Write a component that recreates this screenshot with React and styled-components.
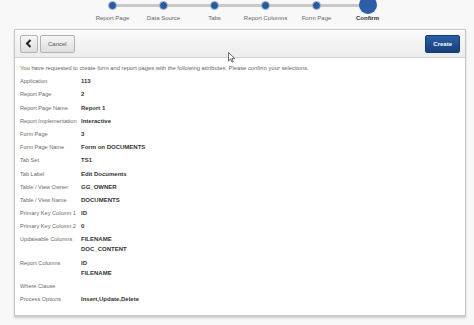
import React from "react";
import styled, { createGlobalStyle } from "styled-components";

const GlobalStyle = createGlobalStyle`
  html, body {
    margin: 0;
    padding: 0;
    background: #f8f8f8;
    font-family: "Liberation Sans", Arial, sans-serif;
    overflow: hidden;
  }
`;

const Page = styled.div`
  position: relative;
  width: 474px;
  height: 325px;
  display: flex;
  flex-direction: column;
  padding: 0 8px 0 14px;
  box-sizing: border-box;
`;

const Stepper = styled.div`
  position: relative;
  display: flex;
  height: 29px;
  margin-left: 73px;
  &::before {
    content: "";
    position: absolute;
    left: 26px;
    width: 254px;
    top: 4px;
    height: 3px;
    background: #c9c9c9;
  }
`;

const Step = styled.div`
  width: 51px;
  display: flex;
  flex-direction: column;
  align-items: center;
`;

const DotSlot = styled.div`
  height: 10px;
  display: flex;
  align-items: center;
  justify-content: center;
  position: relative;
  z-index: 1;
`;

const Dot = styled.div`
  width: ${(p) => (p.$current ? 18 : 7)}px;
  height: ${(p) => (p.$current ? 18 : 7)}px;
  flex-shrink: 0;
  border-radius: 50%;
  background: ${(p) => (p.$current ? "#2c5ea6" : "#2a5a9c")};
  border: ${(p) => (p.$current ? "0" : "1px solid #a9bcd6")};
`;

const StepLabel = styled.div`
  margin-top: 4px;
  font-size: 6px;
  line-height: 8px;
  white-space: nowrap;
  color: ${(p) => (p.$current ? "#333" : "#666")};
  font-weight: ${(p) => (p.$current ? "bold" : "normal")};
`;

const Panel = styled.div`
  height: 285px;
  background: #fff;
  border: 1px solid #c6c6c6;
  box-shadow: 0 2px 2px rgba(0, 0, 0, 0.18);
  display: flex;
  flex-direction: column;
`;

const Header = styled.div`
  height: 27px;
  display: flex;
  align-items: center;
  padding: 0 5px;
  gap: 2px;
  background: linear-gradient(#fbfbfb, #ececec);
  border-bottom: 1px solid #d2d2d2;
`;

const Button = styled.button`
  height: 18px;
  padding: 0 ${(p) => (p.$icon ? 0 : 7)}px;
  width: ${(p) => (p.$icon ? "18px" : "auto")};
  display: flex;
  align-items: center;
  justify-content: center;
  font-family: inherit;
  font-size: 6px;
  border-radius: 2px;
  cursor: pointer;
  color: ${(p) => (p.$primary ? "#fff" : "#555")};
  font-weight: ${(p) => (p.$primary ? "bold" : "normal")};
  background: ${(p) =>
    p.$primary
      ? "linear-gradient(#2c5fa3, #173f7c)"
      : "linear-gradient(#f6f6f6, #dedede)"};
  border: 1px solid ${(p) => (p.$primary ? "#143a72" : "#b3b3b3")};
  margin-left: ${(p) => (p.$push ? "auto" : "0")};
`;

const Body = styled.div`
  padding: 5px 5px 0;
  display: flex;
  flex-direction: column;
  gap: 3.2px;
  font-size: 6px;
  line-height: 10px;
`;

const Intro = styled.div`
  color: #666;
  font-size: 5.8px;
`;

const Row = styled.div`
  display: grid;
  grid-template-columns: 61px 1fr;
`;

const Label = styled.div`
  color: #6a6a6a;
  font-size: 5.6px;
  white-space: nowrap;
`;

const Value = styled.div`
  color: #333;
  font-weight: bold;
  min-height: 10px;
`;

const Cursor = styled.svg`
  position: absolute;
  left: 228px;
  top: 52px;
`;

const steps = [
  "Report Page",
  "Data Source",
  "Tabs",
  "Report Columns",
  "Form Page",
  "Confirm",
];

const rows = [
  ["Application", ["113"]],
  ["Report Page", ["2"]],
  ["Report Page Name", ["Report 1"]],
  ["Report Implementation", ["Interactive"]],
  ["Form Page", ["3"]],
  ["Form Page Name", ["Form on DOCUMENTS"]],
  ["Tab Set", ["TS1"]],
  ["Tab Label", ["Edit Documents"]],
  ["Table / View Owner", ["GG_OWNER"]],
  ["Table / View Name", ["DOCUMENTS"]],
  ["Primary Key Column 1", ["ID"]],
  ["Primary Key Column 2", ["0"]],
  ["Updateable Columns", ["FILENAME", "DOC_CONTENT"]],
  ["Report Columns", ["ID", "FILENAME"]],
  ["Where Clause", []],
  ["Process Options", ["Insert,Update,Delete"]],
];

export default function App() {
  return (
    <Page>
      <GlobalStyle />
      <Stepper>
        {steps.map((s, i) => {
          const current = i === steps.length - 1;
          return (
            <Step key={s}>
              <DotSlot>
                <Dot $current={current} />
              </DotSlot>
              <StepLabel $current={current}>{s}</StepLabel>
            </Step>
          );
        })}
      </Stepper>
      <Panel>
        <Header>
          <Button $icon>
            <svg width="8" height="9" viewBox="0 0 8 9">
              <polyline
                points="5.5,1 2,4.5 5.5,8"
                fill="none"
                stroke="#222"
                strokeWidth="2"
              />
            </svg>
          </Button>
          <Button>Cancel</Button>
          <Button $primary $push>
            Create
          </Button>
        </Header>
        <Body>
          <Intro>
            You have requested to create form and report pages with the
            following attributes. Please confirm your selections.
          </Intro>
          {rows.map(([label, values]) => (
            <Row key={label}>
              <Label>{label}</Label>
              <Value>
                {values.map((v) => (
                  <div key={v}>{v}</div>
                ))}
              </Value>
            </Row>
          ))}
        </Body>
      </Panel>
      <Cursor width="8" height="11" viewBox="0 0 8 11">
        <path d="M0.5 0.5 L0.5 9 L2.6 7 L4 10.2 L5.2 9.7 L3.9 6.6 L6.8 6.6 Z" fill="#fff" stroke="#444" strokeWidth="0.8" />
      </Cursor>
    </Page>
  );
}
